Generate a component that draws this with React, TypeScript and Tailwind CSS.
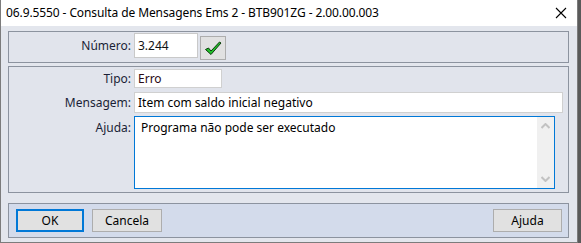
import React from "react";

const ui = { fontFamily: '"Noto Sans", "Open Sans", sans-serif' };

function Check() {
  return (
    <svg width="18" height="16" viewBox="0 0 18 16">
      <path
        d="M1.5 9.5 L4.5 8 L7 11 L15.5 2 L17 3 L7 14.5 Z"
        fill="#22c02a"
        stroke="#0a3a0a"
        strokeWidth="1"
        strokeLinejoin="round"
      />
    </svg>
  );
}

function Chevron({ up }: { up?: boolean }) {
  return (
    <svg width="9" height="6" viewBox="0 0 9 6">
      <path
        d={up ? "M0.5 5 L4.5 1 L8.5 5" : "M0.5 1 L4.5 5 L8.5 1"}
        fill="none"
        stroke="#c2c2c2"
        strokeWidth="2"
      />
    </svg>
  );
}

export default function App() {
  return (
    <div className="w-[581px] h-[243px] bg-[#5a5a5a] flex" style={ui}>
      <div className="w-[578px] h-[243px] flex flex-col border-l border-r border-b border-[#7c7c7c] bg-[#e3e6ed]">
        <div className="h-[26px] bg-white flex items-center justify-between pl-[5px] pr-[10px] shrink-0">
          <span className="text-[12px] text-black tracking-[-0.1px]">
            06.9.5550 - Consulta de Mensagens Ems 2 - BTB901ZG - 2.00.00.003
          </span>
          <svg width="12" height="12" viewBox="0 0 12 12">
            <path d="M1 1 L11 11 M11 1 L1 11" stroke="#000" strokeWidth="1.1" />
          </svg>
        </div>
        <div className="flex flex-col pl-[7px] pr-[8px] pt-[5px]">
          {/* panel 1 */}
          <div className="h-[32px] border border-[#8c939f] bg-[#e1e4ec] flex items-start">
            <div className="w-[122px] h-[26px] mt-[1px] flex items-center justify-end text-[12px] text-[#1a1f36]">
              Número:
            </div>
            <div className="ml-[3px] mt-[1px] w-[64px] h-[25px] bg-white border border-[#c9c9c9] flex items-center pl-[3px] text-[12px] text-[#111]">
              3.244
            </div>
            <div className="ml-[2px] mt-[4px] w-[26px] h-[24px] bg-[#e1e1e1] border border-[#adadad] flex items-center justify-center">
              <Check />
            </div>
          </div>
          {/* panel 2 */}
          <div className="mt-[3px] h-[127px] border border-[#8c939f] bg-[#e1e4ec] flex flex-col pt-[2px] gap-[5px]">
            <div className="flex items-center">
              <div className="w-[122px] text-right text-[12px] text-[#1a1f36]">Tipo:</div>
              <div className="ml-[3px] w-[88px] h-[19px] bg-white border border-[#d0d0d0] flex items-center pl-[3px] text-[12px] text-[#2a0a14]">
                Erro
              </div>
            </div>
            <div className="flex items-center -mt-[1px]">
              <div className="w-[122px] text-right text-[12px] text-[#1a1f36]">Mensagem:</div>
              <div className="ml-[3px] w-[429px] h-[21px] bg-white border border-[#d0d0d0] flex items-center pl-[3px] text-[12px] text-black">
                Item com saldo inicial negativo
              </div>
            </div>
            <div className="flex items-start -mt-[2px]">
              <div className="w-[122px] text-right text-[12px] text-[#1a1f36] pt-[3px]">Ajuda:</div>
              <div className="ml-[3px] w-[421px] h-[73px] bg-white border border-[#0078d7] flex">
                <div className="flex-1 pl-[6px] pt-[2px] text-[12px] text-black">
                  Programa não pode ser executado
                </div>
                <div className="w-[17px] bg-[#f0f0f0] flex flex-col items-center justify-between py-[6px]">
                  <Chevron up />
                  <Chevron />
                </div>
              </div>
            </div>
          </div>
          {/* panel 3 */}
          <div className="mt-[10px] h-[35px] border border-[#8c939f] bg-[#d3dbeb] flex items-start pt-[5px] pl-[7px] pr-[6px]">
            <button className="w-[68px] h-[23px] bg-[#e1e1e1] border-2 border-[#0078d7] text-[12px] text-black flex items-center justify-center">
              OK
            </button>
            <button className="ml-[8px] w-[70px] h-[23px] bg-[#e1e1e1] border border-[#adadad] text-[12px] text-black flex items-center justify-center">
              Cancela
            </button>
            <div className="flex-1" />
            <button className="w-[69px] h-[23px] bg-[#e1e1e1] border border-[#adadad] text-[12px] text-black flex items-center justify-center">
              Ajuda
            </button>
          </div>
        </div>
      </div>
    </div>
  );
}
